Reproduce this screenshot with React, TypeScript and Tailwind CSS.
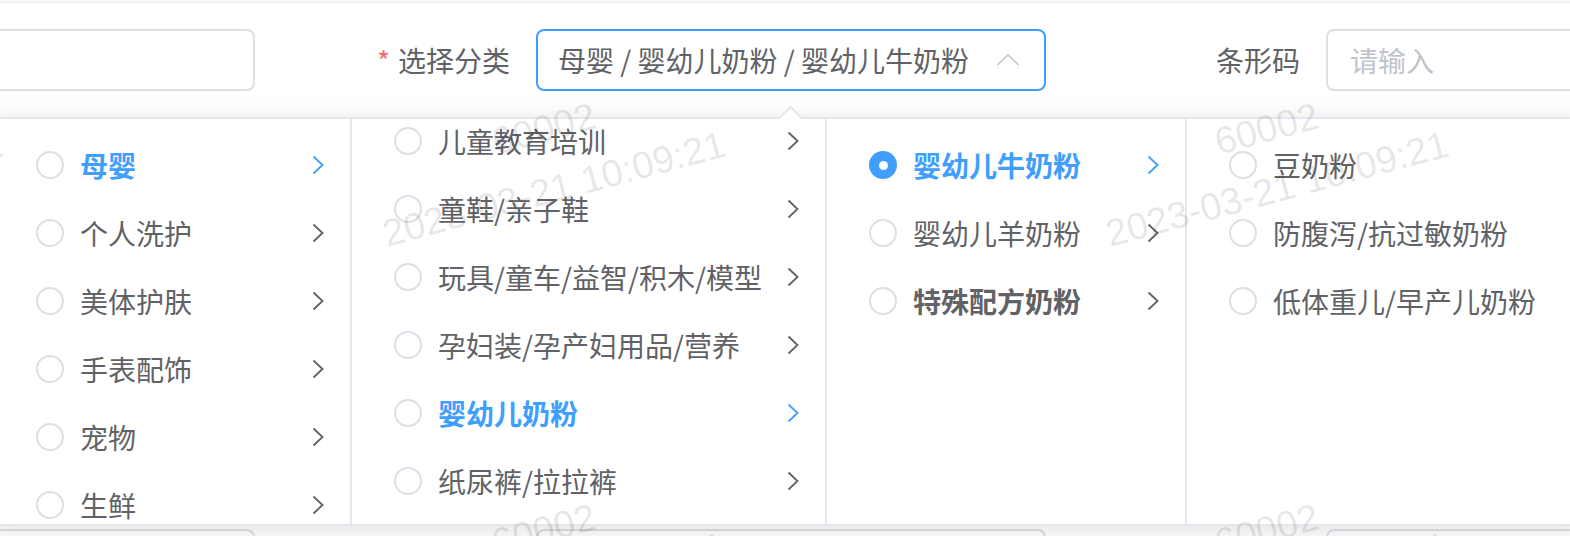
import React from "react";

type Node = { label: string; active?: boolean; checked?: boolean; bold?: boolean; leaf?: boolean };

const col1: Node[] = [
  { label: "母婴", active: true },
  { label: "个人洗护" },
  { label: "美体护肤" },
  { label: "手表配饰" },
  { label: "宠物" },
  { label: "生鲜" },
];

const col2: Node[] = [
  { label: "儿童教育培训" },
  { label: "童鞋/亲子鞋" },
  { label: "玩具/童车/益智/积木/模型" },
  { label: "孕妇装/孕产妇用品/营养" },
  { label: "婴幼儿奶粉", active: true },
  { label: "纸尿裤/拉拉裤" },
];

const col3: Node[] = [
  { label: "婴幼儿牛奶粉", active: true, checked: true },
  { label: "婴幼儿羊奶粉" },
  { label: "特殊配方奶粉", bold: true },
];

const col4: Node[] = [
  { label: "豆奶粉", leaf: true },
  { label: "防腹泻/抗过敏奶粉", leaf: true },
  { label: "低体重儿/早产儿奶粉", leaf: true },
];

const Chevron = ({ active }: { active?: boolean }) => (
  <svg width="12" height="20" viewBox="0 0 12 20" fill="none" className={active ? "text-[#409eff]" : "text-[#606266]"}>
    <polyline points="1.5,1.5 10.5,10 1.5,18.5" stroke="currentColor" strokeWidth="1.8" strokeLinejoin="miter" />
  </svg>
);

const Radio = ({ checked }: { checked?: boolean }) =>
  checked ? (
    <span className="flex h-[28px] w-[28px] shrink-0 items-center justify-center rounded-full bg-[#409eff]">
      <span className="h-[9px] w-[9px] rounded-full bg-white" />
    </span>
  ) : (
    <span className="h-[28px] w-[28px] shrink-0 rounded-full border-2 border-[#dcdfe6] bg-white" />
  );

const Menu = ({ nodes, width, scrolled }: { nodes: Node[]; width: string; scrolled?: boolean }) => (
  <div className={`h-full shrink-0 overflow-hidden border-r-2 border-[#e4e7ed] ${width}`}>
    <ul className={scrolled ? "-mt-[12px]" : "pt-[12px]"}>
      {nodes.map((n) => (
        <li key={n.label} className="flex h-[68px] items-center pl-[42px] pr-[26px]">
          <Radio checked={n.checked} />
          <span
            className={`ml-[16px] flex-1 text-[28px] leading-[40px] ${
              n.active ? "font-bold text-[#409eff]" : n.bold ? "font-bold text-[#606266]" : "text-[#606266]"
            }`}
          >
            {n.label}
          </span>
          {!n.leaf && <Chevron active={n.active} />}
        </li>
      ))}
    </ul>
  </div>
);

const FormRow = ({ filled, className }: { filled?: boolean; className: string }) => (
  <div className={`flex h-[62px] items-center ${className}`}>
    <div className="-ml-[45px] h-[62px] w-[300px] shrink-0 rounded-[8px] border-2 border-[#dcdfe6] bg-white" />
    <label className="w-[281px] shrink-0 pr-[26px] text-right text-[28px] leading-[40px] text-[#606266]">
      {filled && <span className="mr-[8px] text-[#f56c6c]">*</span>}
      {filled ? "选择分类" : ""}
    </label>
    <div
      className={`flex h-[62px] w-[510px] shrink-0 items-center rounded-[8px] border-2 bg-white pl-[20px] pr-[24px] ${
        filled ? "border-[#409eff]" : "border-[#dcdfe6]"
      }`}
    >
      {filled && (
        <>
          <span className="flex-1 text-[28px] leading-[40px] text-[#606266]">母婴 / 婴幼儿奶粉 / 婴幼儿牛奶粉</span>
          <svg width="24" height="14" viewBox="0 0 24 14" fill="none" className="text-[#c0c4cc]">
            <polyline points="1.5,12 12,2 22.5,12" stroke="currentColor" strokeWidth="1.6" />
          </svg>
        </>
      )}
    </div>
    <label className="w-[280px] shrink-0 pr-[26px] text-right text-[28px] leading-[40px] text-[#606266]">
      {filled ? "条形码" : ""}
    </label>
    <div className="flex h-[62px] w-[300px] shrink-0 items-center rounded-[8px] border-2 border-[#dcdfe6] bg-white pl-[22px]">
      {filled && <span className="text-[28px] leading-[40px] text-[#c0c4cc]">请输入</span>}
    </div>
  </div>
);

// watermark tiles: baseline start of "60002", date sits below-left of it
const Watermark = () => {
  const tiles: { x: number; y: number }[] = [];
  for (let k = -1; k <= 2; k++) {
    for (let m = -1; m <= 1; m++) {
      tiles.push({ x: 496 + k * 723, y: 155 + m * 401 });
    }
  }
  return (
    <div className="pointer-events-none absolute inset-0 overflow-hidden font-['Liberation_Sans',sans-serif] text-[38px] leading-[38px] text-black/10">
      {tiles.map((t) => (
        <React.Fragment key={`${t.x}-${t.y}`}>
          <span
            className="absolute origin-[0_32px] -rotate-[15deg] whitespace-nowrap"
            style={{ left: t.x, top: t.y - 32 }}
          >
            60002
          </span>
          <span
            className="absolute origin-[0_32px] -rotate-[15deg] whitespace-nowrap"
            style={{ left: t.x - 109, top: t.y + 92 - 32 }}
          >
            2023-03-21 10:09:21
          </span>
        </React.Fragment>
      ))}
    </div>
  );
};

export default function App() {
  return (
    <div className="relative h-[536px] w-[1570px] overflow-hidden bg-white font-['Noto_Sans_CJK_SC',sans-serif]">
      <div className="h-[3px] border-b border-[#ebeef5] bg-[#f5f7fa]" />
      <FormRow filled className="mt-[26px]" />
      <FormRow className="mt-[438px]" />

      <div className="absolute left-[-8px] top-[117px] h-[409px] w-[1590px] border-2 border-[#e4e7ed] bg-white shadow-[0_4px_24px_rgba(0,0,0,0.12)]">
        <span className="absolute -top-[10px] left-[788px] h-[17px] w-[17px] rotate-45 border-l-2 border-t-2 border-[#e4e7ed] bg-white" />
        <div className="relative flex h-full">
          <Menu nodes={col1} width="w-[358px]" />
          <Menu nodes={col2} width="w-[475px]" scrolled />
          <Menu nodes={col3} width="w-[360px]" />
          <Menu nodes={col4} width="w-[400px]" />
        </div>
      </div>

      <Watermark />
    </div>
  );
}
